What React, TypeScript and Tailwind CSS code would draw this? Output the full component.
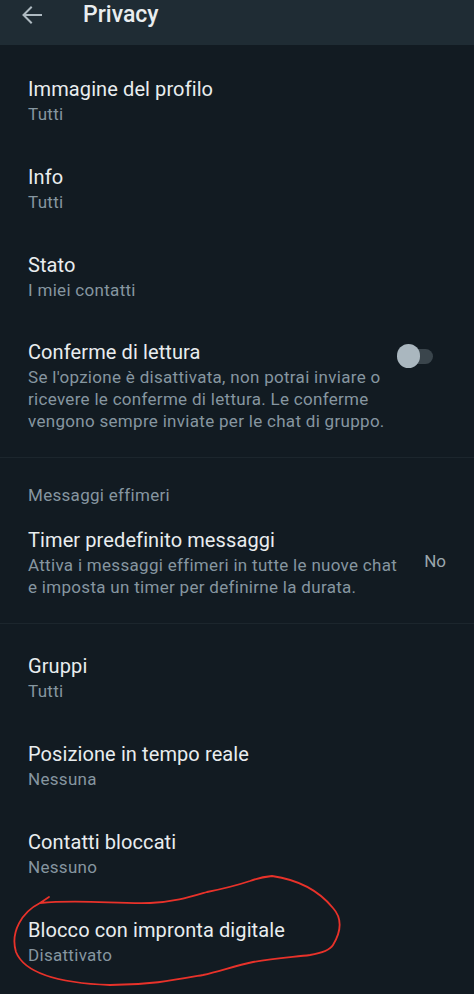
import React from "react";

const font = { fontFamily: "Roboto, 'Noto Sans', Arial, sans-serif" };

function Row({ title, sub }: { title: string; sub: string }) {
  return (
    <div className="px-[28px] py-[21px]">
      <div className="text-[20px] leading-[24px] text-[#e9edef] tracking-[0.1px]">{title}</div>
      <div className="text-[17px] leading-[22px] text-[#8696a0] tracking-[0.3px] mt-[2px] -mb-[2px]">{sub}</div>
    </div>
  );
}

export default function App() {
  return (
    <div className="relative w-[474px] h-[994px] overflow-hidden bg-[#121b22]" style={font}>
      <div className="h-[45px] bg-[#1f2c34] flex items-start">
        <svg className="ml-[22px] mt-[6px]" width="20" height="18" viewBox="0 0 20 18" fill="none" stroke="#aebac1" strokeWidth="2" strokeLinecap="square">
          <path d="M19 9H2" />
          <path d="M9 1.5L1.5 9L9 16.5" />
        </svg>
        <div className="ml-[41px] mt-[0px] text-[23px] leading-[30px] font-medium text-[#e9edef]">Privacy</div>
      </div>

      <div className="pt-[11px]">
        <Row title="Immagine del profilo" sub="Tutti" />
        <Row title="Info" sub="Tutti" />
        <Row title="Stato" sub="I miei contatti" />

        <div className="flex items-start px-[28px] pt-[20px] pb-[25px] border-b border-[#1c262d]">
          <div className="flex-1">
            <div className="text-[20px] leading-[24px] text-[#e9edef] tracking-[0.1px]">Conferme di lettura</div>
            <div className="text-[17px] leading-[22px] text-[#8696a0] tracking-[0.3px] mt-[2px] w-[374px]">
              Se l'opzione è disattivata, non potrai inviare o ricevere le conferme di lettura. Le conferme vengono sempre inviate per le chat di gruppo.
            </div>
          </div>
          <div className="relative w-[40px] h-[24px] mt-[4px] mr-[9px] -ml-[40px]">
            <div className="absolute left-[8px] top-[5px] w-[28px] h-[15px] rounded-full bg-[#3a454c]" />
            <div className="absolute left-0 top-0 w-[23px] h-[24px] rounded-full bg-[#aab7bf]" />
          </div>
        </div>

        <div className="px-[28px] pt-[26px] text-[17px] leading-[22px] text-[#8696a0] tracking-[0.3px]">Messaggi effimeri</div>
        <div className="flex items-center px-[28px] pt-[22px] pb-[25px] border-b border-[#1c262d]">
          <div className="flex-1">
            <div className="text-[20px] leading-[24px] text-[#e9edef] tracking-[0.1px]">Timer predefinito messaggi</div>
            <div className="text-[17px] leading-[22px] text-[#8696a0] tracking-[0.3px] mt-[2px] w-[382px]">
              Attiva i messaggi effimeri in tutte le nuove chat e imposta un timer per definirne la durata.
            </div>
          </div>
          <div className="text-[17px] leading-[22px] text-[#9aa6ad] -mt-[4px]">No</div>
        </div>

        <div className="pt-[9px]">
          <Row title="Gruppi" sub="Tutti" />
          <Row title="Posizione in tempo reale" sub="Nessuna" />
          <Row title="Contatti bloccati" sub="Nessuno" />
          <Row title="Blocco con impronta digitale" sub="Disattivato" />
        </div>
      </div>

      <svg className="absolute left-0 top-0 pointer-events-none" width="474" height="994" viewBox="0 0 474 994" fill="none">
        <path
          d="M49 897 L40 903 C22 912 10 932 16 952 C24 972 55 983 110 985 C150 985 175 980 203 975 C220 971 235 966 253 962 C275 958 295 957 310 955 C322 953 330 950 333 945 C342 930 342 918 333 908 C320 892 300 880 272 876 C262 877 258 878 250 881 C235 886 222 889 207 892 C190 897 175 902 150 903 C115 904 80 899 40 903"
          stroke="#e8322a"
          strokeWidth="1.8"
          strokeLinecap="round"
          strokeLinejoin="round"
        />
      </svg>
    </div>
  );
}
